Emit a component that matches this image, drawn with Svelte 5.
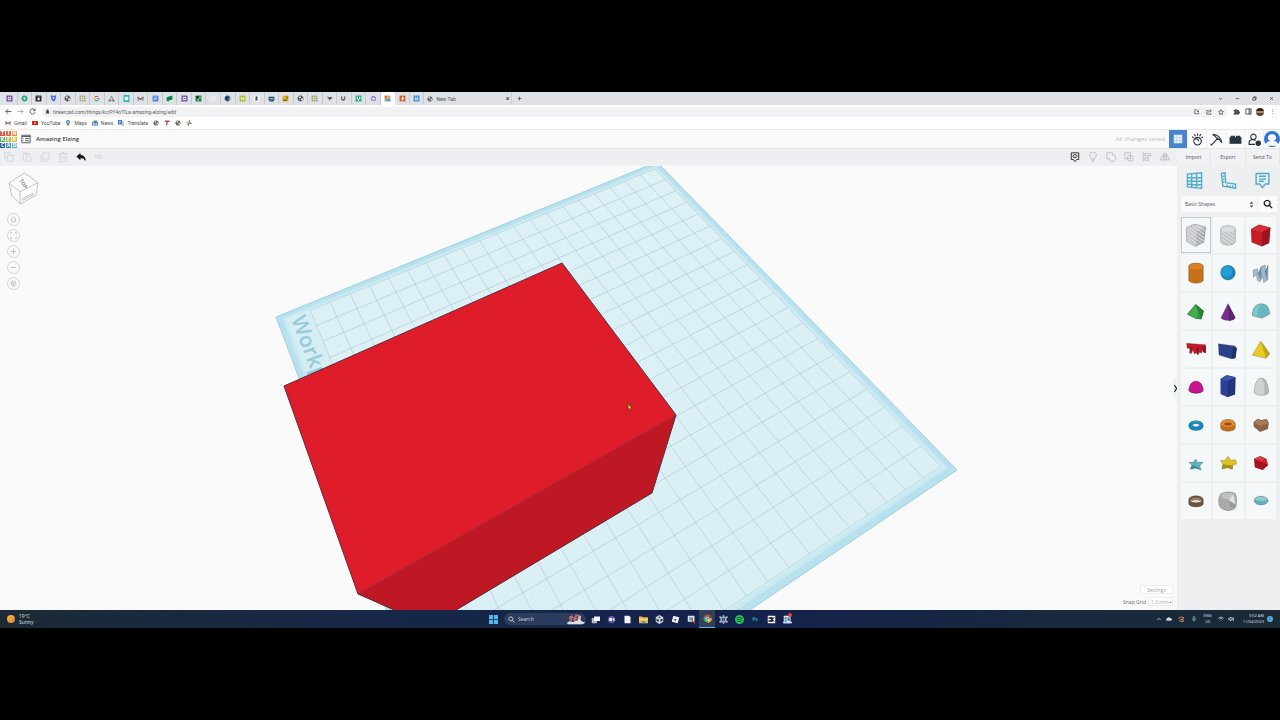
<script>
	const square = 'M1 1h10v10H1z';
	const disc = 'M6 1a5 5 0 1 0 .01 0z';
	const globe = [
		['#4b4f54', disc],
		['#e6e8ea', 'M3 3l3-1 1 2-2 2-2-1zM7 6l3-1v3L7 10zM3 7l2 1v2z']
	];
	const tinkercad = [
		['#e8604c', 'M1 1h5v5H1z'],
		['#f0a63a', 'M6 1h5v5H6z'],
		['#6db66b', 'M1 6h5v5H1z'],
		['#3f8fc8', 'M6 6h5v5H6z']
	];
	const purple = [['#5b3a9e', square], ['#f3eefa', 'M3 3h6v6H3z'], ['#5b3a9e', 'M4.500 5h3v2h-3z']];
	const gmail = [
		['#c5473c', 'M1 2l5 4 5-4v3L6 9 1 5z'],
		['#4a80d8', 'M1 3l2 1.500V10H1z'],
		['#4d9e5a', 'M11 3L9 4.500V10h2z']
	];

	const favicons = [
		purple,
		[['#1ba672', disc], ['#fff', 'M6 4a2 2 0 1 0 .01 0z']],
		[['#1e1f20', square], ['#fff', 'M3 3h6v1H3zM5 5h3v4H4V6h1z']],
		[['#3f6fd0', 'M1 1h4l1 2 1-2h4L9 9l-3 2-3-2z'], ['#cfe0ff', 'M4 4h4L6 8z']],
		globe,
		[['#a7a884', square], ['#e6e6d4', 'M3 3h6v6H3z'], ['#8b8d63', 'M5 5h2v2H5z']],
		[['#fff', disc], ['#e1574a', 'M2 4a5 5 0 0 1 8-1L8 4a3 3 0 0 0-4 1z'], ['#4b9e60', 'M2 8a5 5 0 0 0 8 1L8 8a3 3 0 0 1-4-1z'], ['#4c80d6', 'M6 5h5v3H9V7H6z'], ['#efb73e', 'M1 5h2v3H1z']],
		[['#85898d', 'M6 1l5 9H1z'], ['#eceef0', 'M6 4l2 4H4z'], ['#55595d', 'M1 9h3v2H1zM8 9h3v2H8z']],
		[['#22b8b0', 'M1 0h10v12H1z'], ['#fff', 'M3 3h6v6H3z']],
		gmail,
		[['#4a86e0', square], ['#e5efff', 'M3 3h6v1H3zM3 5h6v1H3zM3 7h4v1H3z']],
		[['#138a4b', 'M1 4l10-3v7l-5 1-2 2-3-1z'], ['#0b6d39', 'M4 5l4-2v4L5 8z']],
		purple,
		[['#197a40', square], ['#112d1c', 'M2 2h4v3H2z'], ['#8bd09f', 'M7 3h3v3H7zM4 7h3v3H4z']],
		[['#e9ebed', 'M2 2h8v8H2z']],
		[['#335a80', disc], ['#183452', 'M3 3h4v3l-2 3-2-2z'], ['#8db4d2', 'M8 5h2v3H8z']],
		[['#a2bb28', square], ['#edf5b0', 'M3 2l3 3 3-3v8L6 7l-3 3z']],
		[['#f7f7f7', square], ['#44484d', 'M6 2a2 2 0 1 0 .01 0zM3 9l2-3h2l2 3z']],
		[['#25405c', 'M1 3h10v5L9 11H3L1 8z'], ['#76b5d8', 'M2 5h8v2H2z'], ['#f0f0f0', 'M4 8h4v1H4z']],
		[['#dfb12a', square], ['#9a7a12', 'M6 2h4v7z'], ['#575022', 'M2 8h6v2H2z']],
		globe,
		[['#9ea580', square], ['#d9ddb9', 'M3 3h6v6H3z'], ['#858d62', 'M5 5h2v2H5z']],
		[['#4d5155', 'M1 3l5 1 3-1 2 3-3 1-2 3-1-3H2l3-1z']],
		[['#62666b', 'M2 2h2v5h3V2h2v6L6 10H4L2 8z']],
		[['#16a97e', square], ['#fff', 'M3 3h2v4h2V3h2v5L7 7v3H5V7L3 8z']],
		[['#8c77c9', 'M6 1l3 2 2 4-2 3H3L1 7l2-4z'], ['#ebe5ff', 'M6 3l1 2 2 1-1 2H4L3 6l2-1z']],
		tinkercad,
		[['#e3562e', square], ['#fff', 'M5 2l4 3-2 2 1 1-3 2V7H3l2-2z']],
		[['#2d83e0', square], ['#cfe6ff', 'M3 3h6v6H3z'], ['#2d83e0', 'M5 4h2v1H5zM4 6h4v1H4z']]
	];

	const bookmarks = [
		{ label: 'Gmail', icon: gmail },
		{ label: 'YouTube', icon: [['#d9251d', 'M0 2h12v8H0z'], ['#fff', 'M5 4l3 2-3 2z']] },
		{ label: 'Maps', icon: [['#3b9c55', 'M6 0a4 4 0 0 1 4 4c0 3-4 8-4 8z'], ['#3f7fd8', 'M6 0a4 4 0 0 0-4 4c0 3 4 8 4 8z'], ['#fff', 'M6 3a1.500 1.500 0 1 0 .01 0z']] },
		{ label: 'News', icon: [['#4a84d8', 'M0 4h12v7H0z'], ['#3e9d58', 'M3 1h7v3H3z'], ['#fff', 'M2 6h3v3H2zM7 6h3v1H7zM7 8h3v1H7z']] },
		{ label: 'Translate', icon: [['#3f7cd8', 'M0 0h8l2 9H0z'], ['#c5cbd2', 'M8 3h4v9H7z'], ['#fff', 'M2 3h4v1H5L3 7z']] },
		{ label: '', name: 'Web link', icon: globe },
		{ label: '', name: 'T site', icon: [['#c9405c', 'M1 1h10v3H8L6 11H4l1-7H2z']] },
		{ label: '', name: 'Second web link', icon: globe },
		{ label: '', name: 'Photos', icon: [['#3f7fd8', 'M6 5h5v3H6z'], ['#e04c3d', 'M5 0l4 2-3 4z'], ['#edb63a', 'M0 4l6 0v3H1z'], ['#499c56', 'M6 6v6L2 10z']] }
	];

	const logo = [
		['T', '#d9533f'], ['I', '#dd6a42'], ['N', '#e58a35'],
		['K', '#5db361'], ['E', '#a4bd43'], ['R', '#e8bc3c'],
		['C', '#2c5f94'], ['A', '#3d8dc4'], ['D', '#62b4d2']
	];

	const editTools = [
		{ name: 'Copy', d: 'M2 2h14v4M2 2v14h4M8 8h14v14H8z' },
		{ name: 'Paste', d: 'M8 20H3V4h4M13 4h5v4M7 2h6v4H7zM10 10h8l4 4v8H10z' },
		{ name: 'Duplicate', d: 'M7 2h15v15H7zM4 7H2v15h15v-2' },
		{ name: 'Delete', d: 'M4 4h16v19H4zM2 4h20M9 1h6v3M9 9v9M15 9v9' },
		{ name: 'Undo', d: 'M10 4l-8 7 8 7v-4c6 0 10 1 12 6 0-8-5-12-12-12z', on: true, filled: true },
		{ name: 'Redo', d: 'M14 5l7 6-7 6v-4H3V9h11z' }
	];

	const viewTools = [
		{ name: 'Show all', d: 'M3 2h18v16h-5l-4 5-4-5H3zM6 10c3-5 9-5 12 0-3 5-9 5-12 0zM12 9v2', on: true },
		{ name: 'Notes', d: 'M8 17c0-4-4-5-4-10a8 7 0 0 1 16 0c0 5-4 6-4 10zM9 20h6M10 23h4' },
		{ name: 'Group', d: 'M2 2h14v5a8 8 0 1 1-6 14L8 16H2z' },
		{ name: 'Ungroup', d: 'M2 2h14v14H2zM15 8a7 7 0 1 1-7 7 7 7 0 0 1 7-7z' },
		{ name: 'Align', d: 'M3 1v22M7 4h14v5H7zM7 14h9v6H7z' },
		{ name: 'Mirror', d: 'M12 1v22M9 4v15H1zM15 4v15h8z' }
	];

	const navButtons = [
		{ name: 'Home view', d: 'M6 12l6-6 6 6M8 11v6h8v-6' },
		{ name: 'Fit view', d: 'M9 6H6v3M15 6h3v3M6 15v3h3M18 15v3h-3' },
		{ name: 'Zoom in', d: 'M12 6v12M6 12h12' },
		{ name: 'Zoom out', d: 'M6 12h12' },
		{ name: 'Orthographic view', d: 'M12 6l5 3v6l-5 3-5-3V9zM7 9l5 3 5-3M12 12v6' }
	];

	const shapes = [
		{ name: 'Box hole', hatch: true, parts: [['#c3c5c8', 'M7 14L32 3l33 9-6 46-24 12L8 56z'], ['#a4a7ab', 'M38 25l27-13-6 46-24 12z']] },
		{ name: 'Cylinder hole', hatch: true, parts: [['#bfc2c5', 'M14 18v38c5 14 39 14 44 0V18c-4-13-40-13-44 0z'], ['#d7d9db', 'M14 18a22 10 0 0 1 44 0 22 10 0 0 1-44 0z']] },
		{ name: 'Box', parts: [['#c81c28', 'M6 19L30 5l34 9-4 46-22 10L8 58z'], ['#d8303a', 'M6 19L30 5l34 9-26 14z'], ['#9e1520', 'M38 28l26-14-4 46-22 10z']] },
		{ name: 'Cylinder', parts: [['#c66f16', 'M14 16v42c5 12 39 12 44 0V16c-4-13-40-13-44 0z'], ['#d98227', 'M14 16a22 10 0 0 1 44 0 22 10 0 0 1-44 0z']] },
		{ name: 'Sphere', parts: [['#1286bd', 'M36 13a22 22 0 1 0 .01 0z'], ['#239ed4', 'M32 15a17 17 0 1 0 .01 0z']] },
		{ name: 'Scribble', parts: [['#9fbbcc', 'M13 27l13-4 1 16 10-23 12-4v20l8-19v43l-13 9-3-20-8 18-8-5-3-17-9 8z'], ['#728fa3', 'M28 38l9-22 1 27-4 16zM47 34l10-18-4 41z']] },
		{ name: 'Roof', parts: [['#2f9a3d', 'M10 46l25-30 24 20-7 25-16-2z'], ['#3fae4b', 'M10 46l25-30 8 29-7 14z'], ['#268534', 'M35 16l24 20-7 25z']] },
		{ name: 'Cone', parts: [['#76308b', 'M36 14l22 42c-5 11-37 11-43 0z'], ['#5e2272', 'M36 14l22 42c-3 6-11 9-19 9z']] },
		{ name: 'Round roof', parts: [['#67b6bd', 'M10 50c0-25 12-36 28-36 15 1 23 10 24 31l-23 13z'], ['#83c5cb', 'M10 50c0-25 12-36 28-36-9 8-12 16-13 38z']] },
		{ name: 'Text', parts: [['#bf1b2a', 'M8 19l57 4v25l-8-3v-7l-5 11-5-3-5 8-5-6-6 3-4-12-5 11-6-3 2-12-9-2z'], ['#8d1420', 'M17 34l9-4-4 16zM37 36l9-5-5 22zM56 29l9-2v20l-7-2z']] },
		{ name: 'Wedge', parts: [['#29418b', 'M7 20l50 7 5 7-4 29-13 2-36-11z'], ['#1e306e', 'M50 32l12 2-4 29-11 2z']] },
		{ name: 'Pyramid', parts: [['#e8ca24', 'M35 12l27 38-11 14-41-9z'], ['#c5a714', 'M35 12l27 38-11 14z']] },
		{ name: 'Half sphere', parts: [['#c9148f', 'M14 46c2-37 42-37 44 0-3 12-40 12-44 0z'], ['#a70e77', 'M14 46c5 8 36 9 44 0-3 12-40 12-44 0z']] },
		{ name: 'Polygon', parts: [['#2c429a', 'M14 12L32 1l26 6-1 51-23 8-20-9z'], ['#3d55ad', 'M14 12L32 1l26 6-22 10z'], ['#21347c', 'M36 17l22-10-1 51-23 8z']] },
		{ name: 'Paraboloid', parts: [['#cfd1d3', 'M15 52c3-26 8-42 21-43 15 1 21 19 23 43-4 12-40 12-44 0z'], ['#b7b9bc', 'M38 9c14 3 19 20 21 43-2 5-9 8-16 9 5-21 4-37-5-52z']] },
		{ name: 'Torus', parts: [['#1488bc', 'M14 38c0-20 44-20 44 0s-44 19-44 0zM25 36c4 7 18 7 22 0-5-5-17-5-22 0z'], ['#34a6d6', 'M16 31c7-10 33-11 40 0-10-5-31-5-40 0z']] },
		{ name: 'Tube', parts: [['#c56c1a', 'M14 32c2-17 42-17 44 0v13c-4 13-40 13-44 0z'], ['#e28b33', 'M14 32c2-17 42-17 44 0-4 12-40 13-44 0z'], ['#9c4f0e', 'M24 33c4 6 20 6 24 0-4-6-20-6-24 0z']] },
		{ name: 'Heart', parts: [['#8d6343', 'M14 28l12-10 10 4 17-3 6 11-3 18-23 8-18-15z'], ['#ab7b56', 'M14 28l12-10 10 4 17-3 6 11-25 9z']] },
		{ name: 'Star thin', parts: [['#64b1bd', 'M14 34h14l7-10 5 10 18-1-11 12 5 12-18-6-15 4 5-12z'], ['#3c8998', 'M24 43l10 3 18 11-18-6-15 4z']] },
		{ name: 'Star', parts: [['#dfc121', 'M13 29l14-1 9-12 9 12 14-2 3 13-12 4-1 12-15-5-16 4 3-15z'], ['#aa9214', 'M21 39l12 3 17 1-1 12-15-5-16 4z']] },
		{ name: 'Icosahedron', parts: [['#d51a29', 'M16 23l18-7 18 8 5 18-16 14-23-7z'], ['#a8121e', 'M16 23l20 9 21 10-16 14-23-7z'], ['#e43643', 'M34 16l18 8-16 8-20-9z']] },
		{ name: 'Ring', parts: [['#6f5240', 'M14 32c2-16 42-16 44 0v12c-3 13-41 13-44 0z'], ['#f0eeeb', 'M18 34c5-8 31-8 36 0-4 9-32 9-36 0z'], ['#96755c', 'M18 34c5-8 31-8 36 0v4c-7-6-29-6-36 0z']] },
		{ name: 'Dice', parts: [['#a8aaac', 'M15 14c14-7 31-6 42-1 7 12 6 33 1 43-13 13-32 11-45-1-8-10-6-32 2-41z'], ['#bfc1c3', 'M17 16c15-6 27-5 38-2L40 32 18 26z'], ['#e1e2e3', 'M53 16l5 30-20-12z'], ['#949799', 'M38 34l20 14-1 7H43z']] },
		{ name: 'Ellipsoid', parts: [['#5fb1bd', 'M15 35c2-18 39-18 43 0-5 17-39 17-43 0z'], ['#8bcbd2', 'M18 32c6-11 30-12 37 0-7 5-30 5-37 0z']] }
	];

	const apps = [
		{ name: 'Task view', parts: [['#b5bcc4', 'M1 4h7v7H1z'], ['#f2f4f6', 'M4 2h8v6H4z']] },
		{ name: 'Chat', parts: [['#6459b8', disc], ['#f2efff', 'M3 4h4v4H3zM8 5l2-1v4L8 7z']] },
		{ name: 'Document', parts: [['#f4f5f6', 'M2 1h6l2 2v8H2z']] },
		{ name: 'File Explorer', parts: [['#e8b642', 'M0 2h4l1 1h7v8H0z'], ['#4c99d4', 'M4 8h4v3H4z'], ['#fad778', 'M0 5h12v2H0z']] },
		{ name: 'Unity', parts: [['#d7dbe1', 'M6 0l5 3v6l-5 3-5-3V3z'], ['#27334c', 'M6 2l2 1-2 1-2-1zM2 5l3 1v3L2 8zM10 5L7 6v3l3-1z']] },
		{ name: 'Roblox', parts: [['#eef0f3', 'M3 1l8 2-2 8-8-2z'], ['#192749', 'M5 5l2 .500-.500 2-2-.500z']] },
		{ name: 'Snipping Tool', parts: [['#d8e0ea', 'M1 1h9v8H1z'], ['#788da7', 'M3 3h5v4H3z'], ['#d64c48', 'M7 6l4 5-1 1-4-5z']] },
		{ name: 'Chrome', active: true, parts: [['#d74737', 'M6 6L1.500 3.500a5.300 5.300 0 0 1 9.500 0H6z'], ['#4ba55c', 'M6 6L1.500 3.500A5.300 5.300 0 0 0 6 11.500z'], ['#edbb36', 'M6 6h5l0-2.500A5.300 5.300 0 0 1 6 11.500z'], ['#fff', 'M6 3.500a2.500 2.500 0 1 0 .01 0z'], ['#4383dc', 'M6 4.300a1.700 1.700 0 1 0 .01 0z']] },
		{ name: 'Settings', parts: [['#9faebf', 'M5 0h2v2l2 .500L10.500 1 12 3l-2 2v2l2 2-1.500 2L9 9.500 7 10v2H5v-2l-2-.500L1.500 11 0 9l2-2V5L0 3l1.500-2L3 2.500 5 2zM6 4a2 2 0 1 0 .01 0z'], ['#3585d2', 'M6 5a1 1 0 1 0 .01 0z']] },
		{ name: 'Spotify', parts: [['#27bd61', 'M6 0a6 6 0 1 0 .01 0z'], ['#10351f', 'M2 3.500q4-1 8 .500v1q-4-1.500-8-.500zM3 6q3-1 6 .500v1Q6 6 3 7zM3 8q3-.500 5 .500v1Q6 8 3 9z']] },
		{ name: 'Photoshop', text: 'Ps', parts: [['#0c2740', square]] },
		{ name: 'CapCut', parts: [['#f5f6f7', 'M1 1h10v10H1z'], ['#171b25', 'M2 3h6v1l2-1v1L7 6l3 2v1L8 8v1H2V7h2l2-1-2-1H2z']] },
		{ name: 'Roblox Studio', badge: true, parts: [['#e7ecf2', 'M1 1h9v10H1z'], ['#557eb5', 'M2 3h3v3H2zM6 3h3v5H6zM2 7h3v3H2z'], ['#c6dff5', 'M0 9h12v2H0z']] }
	];

	// workplane corners in scene units: left, back, right, front
	const corners = [[276, 151], [657, -4], [957, 304], [460, 640]];

	// projective map of the unit square on the four corners
	const [p0, p1, p2, p3] = corners;
	const dx1 = p1[0] - p2[0];
	const dx2 = p3[0] - p2[0];
	const dy1 = p1[1] - p2[1];
	const dy2 = p3[1] - p2[1];
	const sx = p0[0] - p1[0] + p2[0] - p3[0];
	const sy = p0[1] - p1[1] + p2[1] - p3[1];
	const det = dx1 * dy2 - dx2 * dy1;
	const g = (sx * dy2 - dx2 * sy) / det;
	const h = (dx1 * sy - sx * dy1) / det;

	const project = (u, v) => {
		const w = g * u + h * v + 1;
		const x = ((p1[0] - p0[0] + g * p1[0]) * u + (p3[0] - p0[0] + h * p3[0]) * v + p0[0]) / w;
		const y = ((p1[1] - p0[1] + g * p1[1]) * u + (p3[1] - p0[1] + h * p3[1]) * v + p0[1]) / w;
		return `${x.toFixed(2)} ${y.toFixed(2)}`;
	};

	const quad = (m) =>
		`M${project(m, m)}L${project(1 - m, m)}L${project(1 - m, 1 - m)}L${project(m, 1 - m)}Z`;

	// the left side keeps a wider strip free for the plane's name
	const margin = 0.02;
	const nameStrip = 0.07;

	const gridLines = (count) => {
		const end = 1 - margin;
		let d = '';
		for (let i = 0; i <= count; i++) {
			const u = nameStrip + ((end - nameStrip) * i) / count;
			const v = margin + ((end - margin) * i) / count;
			d += `M${project(u, margin)}L${project(u, end)}`;
			d += `M${project(nameStrip, v)}L${project(end, v)}`;
		}
		return d;
	};

	const minorGrid = gridLines(200);
	const majorGrid = gridLines(20);
</script>

{#snippet art(parts, size = 12)}
	<svg class="art" viewBox="0 0 {size} {size}" aria-hidden="true">
		{#each parts as [fill, d]}
			<path {fill} {d} fill-rule="evenodd" />
		{/each}
	</svg>
{/snippet}

{#snippet line(d, filled = false)}
	<svg class="line" class:filled viewBox="0 0 24 24" aria-hidden="true"><path {d} /></svg>
{/snippet}

<main class="letterbox">
	<div class="desktop">
		<div class="tabs">
			<div class="pinned">
				{#each favicons as icon, i}
					<button class="tab" class:active={i === 26} aria-label="Tab {i + 1}">
						{@render art(icon)}
					</button>
				{/each}
			</div>
			<button class="new-tab">{@render art(globe)}<span>New Tab</span><span class="close">×</span></button>
			<button class="plus" aria-label="Open tab">{@render line('M12 3v18M3 12h18')}</button>
			<div class="window-buttons">
				<button aria-label="Search tabs">{@render line('M5 9l7 7 7-7')}</button>
				<button aria-label="Minimize">{@render line('M4 12h16')}</button>
				<button aria-label="Restore">{@render line('M4 8h12v12H4zM8 8V4h12v12h-4')}</button>
				<button aria-label="Close">{@render line('M5 5l14 14M19 5L5 19')}</button>
			</div>
		</div>

		<div class="address">
			<button aria-label="Back">{@render line('M22 12H3M11 4l-8 8 8 8')}</button>
			<button class="faded" aria-label="Forward">{@render line('M2 12h19M13 4l8 8-8 8')}</button>
			<button aria-label="Reload">{@render line('M20 7a9 9 0 1 0 1 7M21 2v7h-7')}</button>
			<div class="url">
				{@render line('M5 10h14v12H5zM8 10V6a4 4 0 0 1 8 0v4', true)}
				<input aria-label="Address" value="tinkercad.com/things/kcrPY4oTlLa-amazing-elzing/edit" />
				<button aria-label="Install">{@render line('M11 3H3v16h16v-5M16 2v10M12 8l4 4 4-4')}</button>
				<button aria-label="Share">{@render line('M10 6H3v15h16v-6M8 15c1-6 5-8 13-8M16 2l5 5-5 5')}</button>
				<button aria-label="Bookmark">{@render line('M12 2l3 7 7 1-5 5 1 7-6-4-6 4 1-7-5-5 7-1z')}</button>
			</div>
			<button aria-label="Extensions">{@render line('M3 7h5a3 3 0 1 1 6 0h6v6a3 3 0 1 1 0 5v4H3v-5a3 3 0 0 0 0-6z', true)}</button>
			<button aria-label="Side panel">{@render line('M3 3h18v18H3zM14 3v18M17 3v18')}</button>
			<button class="profile" aria-label="Profile"></button>
			<button aria-label="Menu">{@render line('M12 4v2M12 11v2M12 18v2')}</button>
		</div>

		<nav class="bookmarks">
			{#each bookmarks as { label, name, icon }}
				<a href="#top" aria-label={label || name}>{@render art(icon)}{#if label}<span>{label}</span>{/if}</a>
			{/each}
		</nav>

		<header>
			<div class="logo">
				{#each logo as [letter, color]}
					<span style="background: {color}">{letter}</span>
				{/each}
			</div>
			<button class="list" aria-label="Designs">{@render line('M2 3h20v18H2zM2 6h20M6 11h1M10 11h9M6 16h1M10 16h9')}</button>
			<h1>Amazing Elzing</h1>
			<span class="saved">All changes saved</span>
			<button class="mode selected" aria-label="3D design">
				<svg viewBox="0 0 24 24"><path d="M2 2h20v20H2zM2 8.500h20M2 15.500h20M8.500 2v20M15.500 2v20" /></svg>
			</button>
			<button class="mode" aria-label="Sim lab">{@render line('M12 8a7 7 0 1 0 .01 0zM8 12c3-2 6 0 6 3M12 1v4M6 2l2 4M18 2l-2 4M2 7l3 2M22 7l-3 2')}</button>
			<button class="mode" aria-label="Blocks">{@render line('M3 22L15 9M5 3c8-1 16 6 17 15-4-6-7-8-10-9-2-3-4-5-7-6zM1 20l3 3')}</button>
			<button class="mode" aria-label="Bricks">{@render line('M2 9h2V6h6v3h4V6h6v3h2v10H2z', true)}</button>
			<button class="mode person" aria-label="Invite">
				<svg class="line" viewBox="0 0 24 24"><path d="M10 2a5 5 0 1 0 .01 0zM13 21H2v-4c0-5 9-6 12-3" /><circle class="dot" cx="19" cy="19" r="5" /></svg>
			</button>
			<button class="avatar" aria-label="Account">
				<svg viewBox="0 0 24 24"><circle cx="12" cy="12" r="12" fill="#3575cf" /><path fill="#f5f8fc" d="M12 5a5 5 0 0 1 2 10c5 0 7 3 8 7H2c1-4 3-7 8-7a5 5 0 0 1 2-10z" /></svg>
			</button>
		</header>

		<div class="toolbar">
			<div class="tools">
				{#each editTools as tool}
					<button class:on={tool.on} aria-label={tool.name}>{@render line(tool.d, tool.filled)}</button>
				{/each}
			</div>
			<div class="tools">
				{#each viewTools as tool}
					<button class:on={tool.on} aria-label={tool.name}>{@render line(tool.d)}</button>
				{/each}
			</div>
			<div class="transfer">
				<button>Import</button>
				<button>Export</button>
				<button>Send To</button>
			</div>
		</div>

		<div class="editor">
			<section class="workspace">
				<svg class="scene" viewBox="0 0 1177 444" preserveAspectRatio="xMidYMid slice">
					<path d={quad(0)} fill="#b8e1ed" />
					<path d={quad(0.011)} fill="#c9e9f2" />
					<path d={quad(0.017)} fill="#d5eef4" />
					<path class="minor" d={minorGrid} />
					<path class="major" d={majorGrid} />
					<path class="rim" d={quad(0)} />
					<text class="plane-name" transform="translate(291 153) rotate(69)">Workplane</text>
					<path fill="#df1d2a" d="M284 220L562 97 676 249 358 428z" />
					<path fill="#be1824" d="M358 428L676 249 652 327 440 454 395 445z" />
					<path class="edge soft" d="M358 428L676 249" />
					<path class="edge" d="M395 444L358 428 284 220 562 97 676 249 652 327 456 444" />
					<path class="cursor" d="M628 237v5l1 1h2v-3l-2-1v-2z" />
				</svg>

				<div class="view-controls">
					<svg class="view-cube" viewBox="0 0 96 102">
						<path d="M3 34L51 3 93 33 87 72 38 99 12 73z" />
						<path d="M3 34L37 61 93 33M37 61l1 38M46 82l32-16v5L47 87z" />
						<text x="48" y="42" transform="rotate(60 48 36)">TOP</text>
					</svg>
					{#each navButtons as { name, d }}
						<button aria-label={name}>{@render line(d)}</button>
					{/each}
				</div>

				<div class="grid-settings">
					<button>Settings</button>
					<label>Snap Grid
						<span class="snap"><select><option>1.0 mm</option></select><i>▲</i></span>
					</label>
				</div>
				<button class="collapse" aria-label="Collapse panel">{@render line('M9 3l6 9-6 9')}</button>
			</section>

			<aside>
				<div class="helpers">
					<button aria-label="Workplane">{@render line('M2 3l20-2v22L2 21zM8 3v18M15 2v20M2 8h20M2 13h20M2 17l20 1')}</button>
					<button aria-label="Ruler">{@render line('M2 2l5-1 1 14 14 2v6L4 20zM4 6h2M4 10h2M4 14h2M10 18v2M14 19v2M18 19v2')}</button>
					<button aria-label="Notes">{@render line('M3 2h18v15h-5l-4 5-4-5H3zM7 6h10M7 10h10M7 13h7')}</button>
				</div>
				<div class="finder">
					<div class="category">
						<select aria-label="Shape category"><option>Basic Shapes</option></select>
						{@render line('M12 2l5 7H7zM12 22l5-7H7z', true)}
					</div>
					<button aria-label="Search shapes">{@render line('M10 3a7 7 0 1 0 .01 0zM15 15l7 7')}</button>
				</div>
				<div class="shapes">
					{#each shapes as { name, parts, hatch }, i}
						<button class:picked={i === 0} aria-label={name}>
							<svg viewBox="0 0 72 72" aria-hidden="true">
								{#each parts as [fill, d]}
									<path {fill} {d} fill-rule="evenodd" />
								{/each}
								{#if hatch}
									<defs>
										<pattern id="hatch{i}" width="9" height="9" patternUnits="userSpaceOnUse" patternTransform="rotate(35)">
											<path d="M0 2h9" stroke="#e3e5e7" stroke-width="3" />
										</pattern>
									</defs>
									<path fill="url(#hatch{i})" d={parts[0][1]} />
								{/if}
								<path class="outline" d={parts[0][1]} />
							</svg>
						</button>
					{/each}
				</div>
			</aside>
		</div>

		<footer>
			<div class="weather">
				<span class="sun"></span>
				<span>19°C<br />Sunny</span>
			</div>
			<div class="apps">
				<button aria-label="Start">{@render art([['#55b9ee', 'M0 0h5.500v5.500H0zM6.500 0H12v5.500H6.500zM0 6.500h5.500V12H0zM6.500 6.500H12V12H6.500z']])}</button>
				<div class="search">
					{@render line('M10 3a7 7 0 1 0 .01 0zM15 15l7 7')}
					<input aria-label="Search" placeholder="Search" />
					<svg class="doodle" viewBox="0 0 60 34" aria-hidden="true">
						<path fill="#dedfe4" d="M2 29l8-5 14 2 13-15 9 12 12 5-9 5H7z" />
						<path fill="#b76e70" d="M9 10l10-5 5 9 5-12 9 3-4 18H10z" />
						<path fill="#514d65" d="M18 15h5v11h-5zM32 8h4v13h-4zM9 18h5v5H9z" />
						<path fill="#e9b4a7" d="M38 5l7 4-1 10-7-2z" />
					</svg>
				</div>
				{#each apps as { name, parts, active, text, badge }}
					<button class:running={active} aria-label={name}>
						{@render art(parts)}
						{#if text}<span class="caption">{text}</span>{/if}
						{#if badge}<span class="badge"></span>{/if}
					</button>
				{/each}
			</div>
			<div class="tray">
				{@render line('M5 16l7-7 7 7')}
				{@render line('M3 18a5 5 0 0 1 3-9 7 7 0 0 1 12 0 5 5 0 0 1 3 9z', true)}
				<span class="update">{@render line('M3 12a9 9 0 0 1 15-6l3 3M21 3v6h-6M4 18l5 3M12 14h9v8h-9z')}</span>
				<span class="mic">{@render line('M9 3h6v11H9zM5 11c0 9 14 9 14 0M12 18v5')}</span>
				<span class="language">ENG<br />US</span>
				{@render line('M2 9c6-6 14-6 20 0M6 13c4-4 8-4 12 0M12 18v1')}
				{@render line('M3 9h4l5-5v16l-5-5H3zM16 8c2 2 2 6 0 8M19 4c4 4 4 12 0 16')}
				<span class="clock">9:52 AM<br />11/04/2023</span>
				<span class="count">2</span>
			</div>
		</footer>
	</div>
</main>

<style>
	:global(body) {
		background: #000;
	}

	.letterbox {
		display: flex;
		box-sizing: border-box;
		min-height: 100vh;
		padding: 92px 0;
		font-family: 'Open Sans', sans-serif;
		font-size: 5px;
		line-height: 6px;
		color: #4d5258;
	}

	.desktop {
		display: flex;
		flex-direction: column;
		flex: 1;
		min-width: 0;
		background: #fff;
	}

	button,
	input,
	select {
		padding: 0;
		border: 0;
		background: none;
		color: inherit;
		font: inherit;
		appearance: none;
	}

	button {
		display: flex;
		align-items: center;
		justify-content: center;
	}

	svg {
		display: block;
		flex: none;
	}

	.art {
		width: 7px;
		height: 7px;
	}

	.line {
		width: 7px;
		height: 7px;
		fill: none;
		stroke: currentColor;
		stroke-width: 3;
	}

	.filled {
		fill: currentColor;
		stroke-width: 1;
	}

	.tabs {
		display: flex;
		height: 13px;
		padding-left: 3px;
		background: #dee1e5;
		font-family: Roboto, sans-serif;
	}

	.pinned {
		display: grid;
		grid-template-columns: repeat(29, 1fr);
		width: 33%;
	}

	.tab {
		border-right: 1px solid #c6c9cd;
	}

	.tab.active {
		border-radius: 3px 3px 0 0;
		border-color: transparent;
		background: #fff;
	}

	.new-tab {
		gap: 3px;
		width: 88px;
		padding: 0 2px 0 3px;
		border-right: 1px solid #c6c9cd;
	}

	.new-tab .art {
		width: 6px;
		height: 6px;
	}

	.close {
		margin-left: auto;
		color: #26292c;
		font-size: 7px;
	}

	.plus {
		width: 14px;
		color: #303438;
	}

	.plus .line,
	.window-buttons .line {
		width: 5px;
		height: 5px;
	}

	.window-buttons {
		display: flex;
		margin-left: auto;
		color: #303438;
	}

	.window-buttons button {
		width: 17px;
	}

	.address {
		display: flex;
		align-items: center;
		height: 13px;
		padding: 0 2px;
		color: #4d5156;
		font-family: Roboto, sans-serif;
	}

	.address > button {
		width: 12px;
	}

	.address .faded {
		color: #a5a8ac;
	}

	.url {
		display: flex;
		flex: 1;
		align-items: center;
		height: 10px;
		margin: 0 2px 0 4px;
		padding: 0 1px 0 3px;
		border-radius: 5px;
		background: #f0f2f3;
	}

	.url > .line {
		width: 5px;
		height: 5px;
	}

	.url input {
		flex: 1;
		min-width: 0;
		margin-left: 3px;
		color: #5f6368;
	}

	.url button {
		width: 12px;
	}

	.url button .line {
		width: 6px;
		height: 6px;
	}

	.address .profile {
		width: 8px;
		height: 8px;
		margin: 0 2px;
		border-radius: 50%;
		background: linear-gradient(#2d2921 40%, #b28a4c 40% 60%, #594530 60%);
	}

	.bookmarks {
		display: flex;
		align-items: center;
		gap: 5px;
		height: 12px;
		padding: 0 5px 1px;
		border-bottom: 1px solid #e8e9eb;
		box-sizing: border-box;
		font-family: Roboto, sans-serif;
	}

	.bookmarks a {
		display: flex;
		align-items: center;
		gap: 3px;
		color: #4b4f54;
		text-decoration: none;
	}

	.bookmarks .art {
		width: 6px;
		height: 6px;
	}

	header {
		display: flex;
		align-items: center;
		height: 18px;
		background: #fafafb;
	}

	.logo {
		display: grid;
		grid-template-columns: repeat(3, 5px);
		grid-auto-rows: 5px;
		gap: 1px;
	}

	.logo span {
		color: #fff;
		font-size: 5px;
		font-weight: 700;
		line-height: 5px;
		text-align: center;
	}

	.list {
		margin: 0 5px 0 4px;
		color: #3a4148;
	}

	.list .line {
		width: 10px;
		height: 10px;
		stroke-width: 2;
	}

	h1 {
		margin: 0;
		color: #363f47;
		font-size: 6px;
		font-weight: 600;
		line-height: 8px;
	}

	.saved {
		margin-left: auto;
		padding-right: 4px;
		color: #bcc0c4;
		font-size: 6px;
	}

	.mode {
		width: 19px;
		height: 18px;
		border-right: 1px solid #eff0f2;
		box-sizing: border-box;
		color: #26333f;
	}

	.mode svg {
		width: 13px;
		height: 13px;
		stroke-width: 2;
	}

	.person .dot {
		fill: #26333f;
		stroke: none;
	}

	.mode.selected {
		background: #4983cd;
	}

	.selected svg {
		width: 10px;
		height: 10px;
		fill: #f4f9ff;
		stroke: #85afe0;
		stroke-width: 1;
	}

	.avatar svg {
		width: 16px;
		height: 16px;
	}

	.toolbar {
		display: flex;
		height: 18px;
		border-top: 1px solid #e6e7e9;
		border-bottom: 1px solid #f2f2f4;
		box-sizing: border-box;
		background: #eeeff1;
	}

	.tools {
		display: flex;
		color: #cfd2d5;
	}

	.tools button {
		width: 18px;
	}

	.tools .line {
		width: 10px;
		height: 10px;
		stroke-width: 2;
	}

	.tools + .tools {
		margin-left: auto;
		padding-right: 3px;
		color: #b7babe;
	}

	.tools .on {
		color: #111;
	}

	.transfer {
		display: grid;
		grid-template-columns: repeat(3, 1fr);
		gap: 1px;
		width: 103px;
		padding-right: 1px;
		box-sizing: border-box;
		background: #e5e7e9;
	}

	.transfer button {
		background: #f1f2f4;
		color: #4d545b;
	}

	.editor {
		display: flex;
		flex: 1;
	}

	.workspace {
		position: relative;
		flex: 1;
		overflow: hidden;
		background: #fafafa;
	}

	.scene {
		position: absolute;
		inset: 0;
		width: 100%;
		height: 100%;
	}

	.scene path {
		stroke-linejoin: round;
	}

	.minor {
		fill: none;
		stroke: #fff;
		stroke-width: 0.5;
		opacity: 0.4;
	}

	.major {
		fill: none;
		stroke: #93b7c0;
		stroke-width: 0.5;
		opacity: 0.8;
	}

	.rim {
		fill: none;
		stroke: #9bd3e2;
	}

	.plane-name {
		fill: #97cbda;
		font-size: 21px;
		font-weight: 600;
	}

	.edge {
		fill: none;
		stroke: #5d2b3c;
	}

	.soft {
		stroke: #a92332;
	}

	.cursor {
		fill: #f2df3c;
		stroke: #6d4412;
	}

	.view-controls {
		position: absolute;
		top: 6px;
		left: 7px;
		display: flex;
		flex-direction: column;
		gap: 3px;
		color: #b9bcc0;
	}

	.view-cube {
		width: 33px;
		height: 33px;
		margin-bottom: 5px;
		fill: #fbfbfb;
		stroke: #bfc1c4;
		stroke-width: 3;
	}

	.view-cube text {
		fill: #8d9094;
		stroke: none;
		font-size: 16px;
		font-weight: 700;
		text-anchor: middle;
	}

	.view-controls button {
		width: 13px;
		height: 13px;
		border: 1px solid #cfd1d3;
		border-radius: 50%;
		box-sizing: border-box;
		background: #fbfbfb;
	}

	.view-controls .line {
		width: 11px;
		height: 11px;
		stroke-width: 2;
	}

	.grid-settings {
		position: absolute;
		right: 4px;
		bottom: 4px;
		display: flex;
		flex-direction: column;
		align-items: flex-end;
		gap: 3px;
		color: #666b70;
	}

	.grid-settings button {
		width: 33px;
		height: 9px;
		border: 1px solid #ededee;
		box-sizing: border-box;
		background: #fff;
		color: #9a9da1;
	}

	.grid-settings label {
		display: flex;
		align-items: center;
		gap: 2px;
	}

	.snap {
		display: flex;
		align-items: center;
		justify-content: space-between;
		width: 25px;
		height: 9px;
		padding: 0 1px 0 2px;
		border: 1px solid #ededee;
		box-sizing: border-box;
		background: #fff;
		color: #a5a8ab;
	}

	.snap i {
		color: #555;
		font-size: 3px;
		font-style: normal;
	}

	.collapse {
		position: absolute;
		top: 212px;
		right: 0;
		width: 4px;
		height: 20px;
		background: #f1f2f3;
		color: #222;
	}

	.collapse .line {
		width: 9px;
		height: 9px;
	}

	aside {
		display: flex;
		flex-direction: column;
		width: 103px;
		background: #eeeff1;
	}

	.helpers {
		display: grid;
		grid-template-columns: repeat(3, 1fr);
		height: 28px;
		color: #58abc4;
	}

	.helpers .line {
		width: 17px;
		height: 17px;
		stroke-width: 2;
		fill: #e1f1f5;
	}

	.finder {
		display: flex;
		gap: 1px;
		height: 16px;
		padding: 2px 3px 0 4px;
	}

	.category {
		display: flex;
		flex: 1;
		align-items: center;
		padding: 0 2px 0 4px;
		background: #f8fafb;
	}

	.category select {
		flex: 1;
		height: 14px;
		color: #4f575e;
	}

	.finder > button {
		width: 19px;
		background: #fafbfc;
		color: #171a1d;
	}

	.finder > button .line {
		width: 10px;
		height: 10px;
	}

	.shapes {
		display: grid;
		grid-template-columns: repeat(3, 1fr);
		grid-auto-rows: 36px;
		gap: 2px;
		padding: 5px 4px 0;
	}

	.shapes button {
		background: #f5f8f9;
	}

	.shapes .picked {
		border: 1px solid #c1cad6;
	}

	.shapes svg {
		width: 24px;
		height: 24px;
	}

	.outline {
		fill: none;
		stroke: #26303a;
		stroke-width: 2;
		stroke-opacity: 0.35;
	}

	footer {
		display: grid;
		grid-template-columns: 1fr auto 1fr;
		align-items: center;
		height: 18px;
		background: linear-gradient(90deg, #1c2a36, #172748 30%, #14224c 60%, #172940 80%, #1c2a36);
		color: #dce1e6;
	}

	.weather {
		display: flex;
		align-items: center;
		gap: 4px;
		padding-left: 7px;
	}

	.sun {
		width: 8px;
		height: 8px;
		border-radius: 50%;
		background: linear-gradient(135deg, #f7b847, #e68226);
	}

	.apps {
		display: flex;
		align-items: center;
	}

	.apps button {
		position: relative;
		width: 16px;
		height: 18px;
	}

	.apps .art {
		width: 9px;
		height: 9px;
	}

	.apps .running {
		border-bottom: 1px solid #65b9e5;
		box-sizing: border-box;
		background: #33405b;
	}

	.search {
		display: flex;
		align-items: center;
		gap: 3px;
		width: 82px;
		height: 12px;
		margin: 0 1px 0 3px;
		padding-left: 4px;
		border-radius: 6px;
		box-sizing: border-box;
		background: #2c3c5d;
	}

	.search input {
		flex: 1;
		min-width: 0;
	}

	.search input::placeholder {
		color: #ccd3df;
		opacity: 1;
	}

	.doodle {
		width: 20px;
		height: 12px;
	}

	.caption {
		position: absolute;
		color: #378ece;
		font-weight: 700;
	}

	.badge {
		position: absolute;
		top: 3px;
		right: 3px;
		width: 4px;
		height: 4px;
		border-radius: 50%;
		background: #d83d43;
	}

	.tray {
		display: flex;
		align-items: center;
		justify-content: flex-end;
		gap: 4px;
		padding-right: 7px;
	}

	.tray .line {
		width: 6px;
		height: 6px;
	}

	.update {
		margin-left: 2px;
		color: #e6a652;
	}

	.mic {
		margin: 0 3px;
		color: #69b4c2;
	}

	.language {
		margin-right: 2px;
		font-size: 4px;
		text-align: center;
	}

	.clock {
		margin-left: 5px;
		font-size: 4px;
		text-align: right;
	}

	.count {
		width: 6px;
		margin-left: -1px;
		border-radius: 50%;
		background: #4cb4e5;
		color: #14364a;
		font-size: 4px;
		text-align: center;
	}
</style>
